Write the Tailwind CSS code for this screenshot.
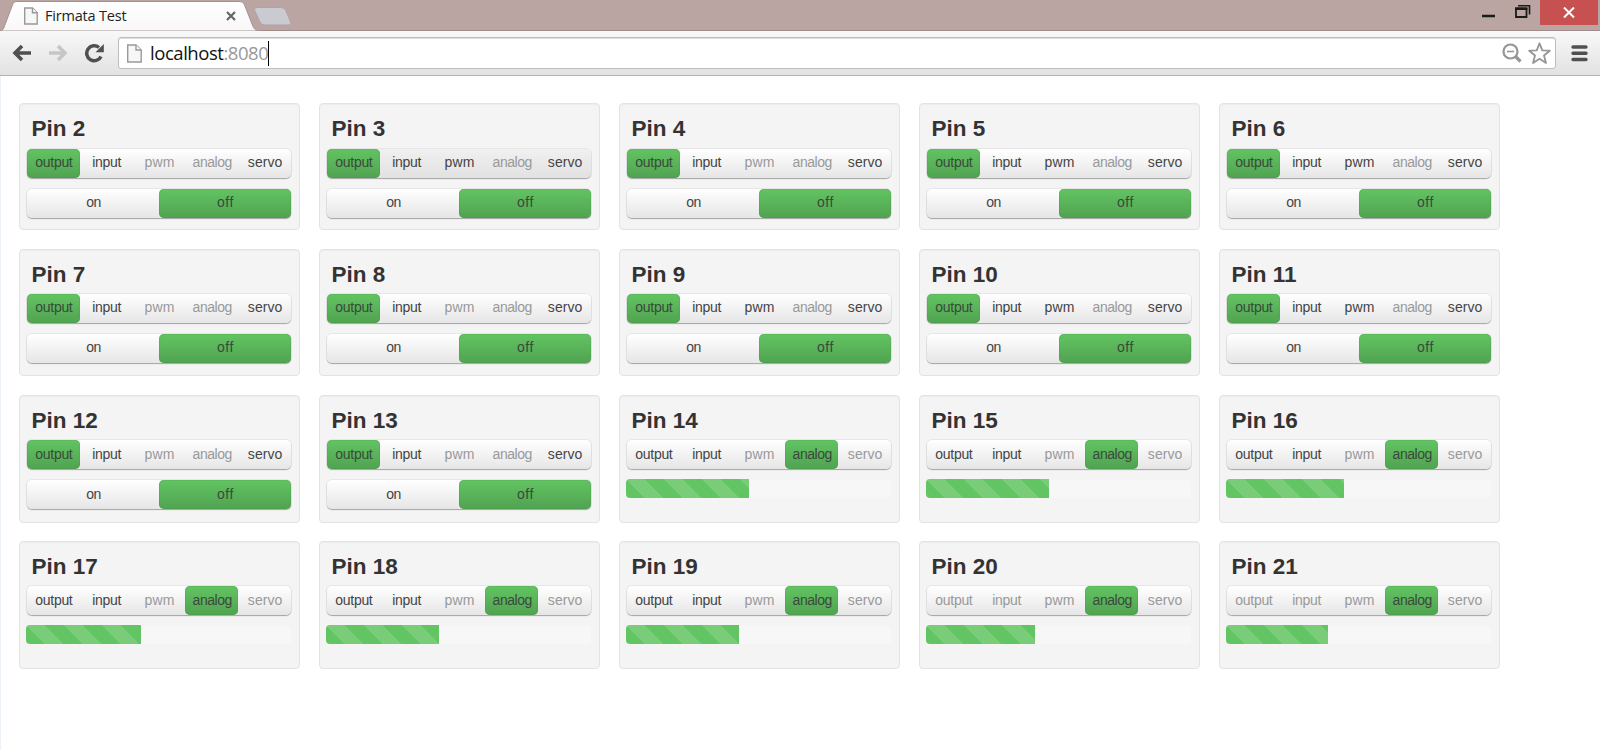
<!DOCTYPE html>
<html lang="en">
<head>
  <meta charset="UTF-8" />
  <meta name="viewport" content="width=device-width, initial-scale=1.0"/>
  <title>Firmata Test</title>
  <script src="https://cdn.jsdelivr.net/npm/@tailwindcss/browser@4"></script>
</head>
<body class="h-screen overflow-hidden bg-white font-['Liberation_Sans',Arial,sans-serif]">
  <!-- tab strip -->
  <div class="flex h-[31px] w-full bg-[#bba5a3] font-['Open_Sans',sans-serif] shadow-[inset_0_-1px_0_#a08c8b]">
    <div class="relative flex">
      <svg class="absolute left-0 top-0" width="300" height="31" viewBox="0 0 300 31">
        <defs>
          <linearGradient id="tab" x1="0" y1="0" x2="0" y2="1">
            <stop offset="0" stop-color="#ffffff"/>
            <stop offset="1" stop-color="#f8f8f8"/>
          </linearGradient>
        </defs>
        <path d="M0 31 C4 30 4 27 6 22 L12 6 C14 1.5 15 1.5 18 1.5 H238 C242 1.5 243 2 245 6 L252 24 C254 29 255 30.5 260 31 Z" fill="url(#tab)" stroke="#a39190" stroke-width="1"/>
        <path d="M257 7.500 H281 Q284 7.500 285.500 10 L290.500 22 Q291.500 25 288 25 H265 Q261 25 260 22 L254.500 10 Q254 7.500 257 7.500 Z" fill="#cacad1" stroke="#b3a3a4"/>
      </svg>
      <div class="relative flex w-[236px] items-center pl-6 pt-px">
        <svg width="14" height="18" viewBox="0 0 14 18" fill="#f7f7f7" stroke="#999" stroke-width="1.400"><path d="M.7 1 H8.500 L13.200 5.800 V17 H.7 Z"/><path d="M8.500 1 V5.800 H13.200"/></svg>
        <span class="ml-[7px] flex-1 whitespace-nowrap text-[14.500px] tracking-[-0.200px] text-[#222]">Firmata Test</span>
        <svg width="10" height="10" viewBox="0 0 10 10" stroke="#666" stroke-width="2.200"><path d="M1 1 L9 9 M9 1 L1 9"/></svg>
      </div>
    </div>
    <!-- window buttons -->
    <div class="ml-auto flex">
      <svg class="mr-[19px]" width="14" height="25" viewBox="0 0 14 25" fill="none" stroke="#1a1a1a" stroke-width="2.500"><path d="M0 16 H13"/></svg>
      <svg class="mr-[9px]" width="16" height="25" viewBox="0 0 16 25" fill="none" stroke="#1a1a1a"><path d="M3 5.700 H14.500 V14.500" stroke-width="1.600"/><path d="M1 9 H11.500 V17 H1 Z" stroke-width="1.800"/><path d="M0 8.500 H12.400" stroke-width="2.500"/></svg>
      <div class="mr-[2px] flex h-[25px] w-[58px] items-center justify-center bg-[#c75050]">
        <svg width="12" height="11" viewBox="0 0 12 11" stroke="#fff" stroke-width="2"><path d="M1 .5 L11 10.500 M11 .5 L1 10.500"/></svg>
      </div>
    </div>
  </div>

  <!-- toolbar -->
  <div class="flex h-[45px] items-start border-b border-[#b3b3b3] bg-linear-to-b from-[#f8f8f8] to-[#e2e2e2] pl-3 pr-3 pt-[6px]">
    <svg class="mt-[7px]" width="20" height="18" viewBox="0 0 20 18" fill="none" stroke="#505050" stroke-width="3.600"><path d="M3 9 H19 M10 2 L3 9 L10 16"/></svg>
    <svg class="ml-4 mt-[7px]" width="20" height="18" viewBox="0 0 20 18" fill="none" stroke="#c6c6c6" stroke-width="3.600"><path d="M1 9 H17 M10 2 L17 9 L10 16"/></svg>
    <svg class="ml-4 mt-[6px]" width="21" height="20" viewBox="0 0 21 20"><path d="M17 13.500 A7.500 7.500 0 1 1 15 4.500" fill="none" stroke="#505050" stroke-width="3.500"/><path d="M19.800 1 V9.300 H11.500 Z" fill="#505050"/></svg>
    <div class="ml-[13px] flex h-[32px] flex-1 items-center rounded-[3px] border border-[#bdbdbd] bg-white pl-[8px] pr-[4px] shadow-[inset_0_1px_0_#dcdcdc]">
      <svg width="15" height="19" viewBox="0 0 15 19" fill="#f7f7f7" stroke="#999" stroke-width="1.400"><path d="M.7 1 H9 L14.200 6 V18 H.7 Z"/><path d="M9 1 V6 H14.200"/></svg>
      <span class="ml-[8px] whitespace-nowrap font-['Open_Sans',sans-serif] text-[18.500px] tracking-[-0.450px] text-[#111]">localhost<span class="text-[#999]">:8080</span></span>
      <div class="h-[25px] w-px bg-black"></div>
      <div class="flex-1"></div>
      <svg width="20" height="20" viewBox="0 0 20 20" fill="none" stroke="#969696"><circle cx="8.500" cy="8.500" r="7" stroke-width="2.200"/><path d="M5 8.500 H12" stroke-width="1.600"/><path d="M13.500 13.500 L18.500 18.500" stroke-width="3.200"/></svg>
      <svg class="ml-[6px]" width="23" height="23" viewBox="0 0 23 23" fill="#fff" stroke="#969696" stroke-width="1.800" stroke-linejoin="round"><path d="M11.500 1.300 L14.300 8.300 L21.800 8.700 L16 13.500 L18 21 L11.500 16.800 L5 21 L7 13.500 L1.200 8.700 L8.700 8.300 Z"/></svg>
    </div>
    <svg class="ml-[15px] mt-[8px]" width="17" height="17" viewBox="0 0 17 17" stroke="#505050" stroke-width="3.400" stroke-linecap="round"><path d="M2 2 H15 M2 8.200 H15 M2 14.500 H15"/></svg>
  </div>

  <div class="h-[674px] border-l border-[#edf2f8] pl-[18px] pt-[26.500px]">
    <div id="pins" class="grid w-[1481px] grid-cols-5 gap-x-[19px] gap-y-[18.750px]"></div>
  </div>

  <script>
    const MODES = ['output', 'input', 'pwm', 'analog', 'servo'];
    const SPACING = {
      output: 'tracking-[-0.300px]',
      input: 'tracking-[-0.300px]',
      pwm: 'tracking-[0.200px]',
      analog: 'tracking-[-0.450px]',
      servo: 'tracking-[0.050px]',
      on: 'tracking-[-0.500px]',
      off: 'tracking-[0.600px]'
    };
    const GREEN = 'rounded-[5px] bg-linear-to-b from-[#62c462] to-[#51a351] text-[#3a4a3a] shadow-[inset_0_0_1px_#2f7a2f]';

    // pin number, active mode, disabled modes, analog level in px
    const pins = [
      [2, 'output', ['pwm', 'analog']],
      [3, 'output', ['analog']],
      [4, 'output', ['pwm', 'analog']],
      [5, 'output', ['analog']],
      [6, 'output', ['analog']],
      [7, 'output', ['pwm', 'analog']],
      [8, 'output', ['pwm', 'analog']],
      [9, 'output', ['analog']],
      [10, 'output', ['analog']],
      [11, 'output', ['analog']],
      [12, 'output', ['pwm', 'analog']],
      [13, 'output', ['pwm', 'analog']],
      [14, 'analog', ['pwm', 'servo'], 122.5],
      [15, 'analog', ['pwm', 'servo'], 122.5],
      [16, 'analog', ['pwm', 'servo'], 117.5],
      [17, 'analog', ['pwm', 'servo'], 115],
      [18, 'analog', ['pwm', 'servo'], 112.5],
      [19, 'analog', ['pwm', 'servo'], 112.5],
      [20, 'analog', ['output', 'input', 'pwm', 'servo'], 108.5],
      [21, 'analog', ['output', 'input', 'pwm', 'servo'], 101.5]
    ];

    function button(label, active, disabled) {
      const state = active ? GREEN : disabled ? 'text-[#999]' : 'text-[#444]';
      return `<div class="flex flex-1 items-center justify-center pb-px pl-px ${SPACING[label]} ${state}">${label}</div>`;
    }

    function group(buttons, hover) {
      const fill = hover ? 'from-[#f0f0f0] to-[#e2e2e2]' : 'from-white to-[#e6e6e6]';
      return `<div class="flex h-[29px] rounded-[5px] bg-linear-to-b ${fill} text-[14px] shadow-[0_1px_1px_#a3a3a3,0_0_0_1px_#e6e6e6]">${buttons}</div>`;
    }

    document.getElementById('pins').innerHTML = pins.map(([pin, mode, disabled, level]) => {
      const modes = group(MODES.map(m => button(m, m === mode, disabled.includes(m))).join(''), pin === 3);
      const control = mode === 'output'
        ? `<div class="mt-[11px]">${group(button('on') + button('off', true))}</div>`
        : `<div class="-ml-px mt-[9.500px] h-[19px] overflow-hidden rounded-[4px] bg-[#f7f7f7] shadow-[inset_0_1px_1px_rgba(0,0,0,.02)]">
             <div class="h-full bg-[#62c462] bg-[linear-gradient(45deg,rgba(255,255,255,.15)_25%,transparent_25%,transparent_50%,rgba(255,255,255,.15)_50%,rgba(255,255,255,.15)_75%,transparent_75%,transparent)] bg-[length:38px_38px]" style="width: ${level}px"></div>
           </div>`;
      // the first row sits slightly looser under its headings
      const gap = pin < 7 ? 'mb-[4px]' : 'mb-[3px]';
      return `<div class="h-[127.500px] rounded-[4px] border border-[#e3e3e3] bg-[#f4f4f4] pl-[7px] pr-[8px] pt-[9px] shadow-[inset_0_1px_1px_rgba(0,0,0,.03)]">
        <h3 class="${gap} pl-[4.500px] text-[22.500px] leading-8 font-bold text-[#333]">Pin ${pin}</h3>
        ${modes}
        ${control}
      </div>`;
    }).join('');
  </script>
</body>
</html>
